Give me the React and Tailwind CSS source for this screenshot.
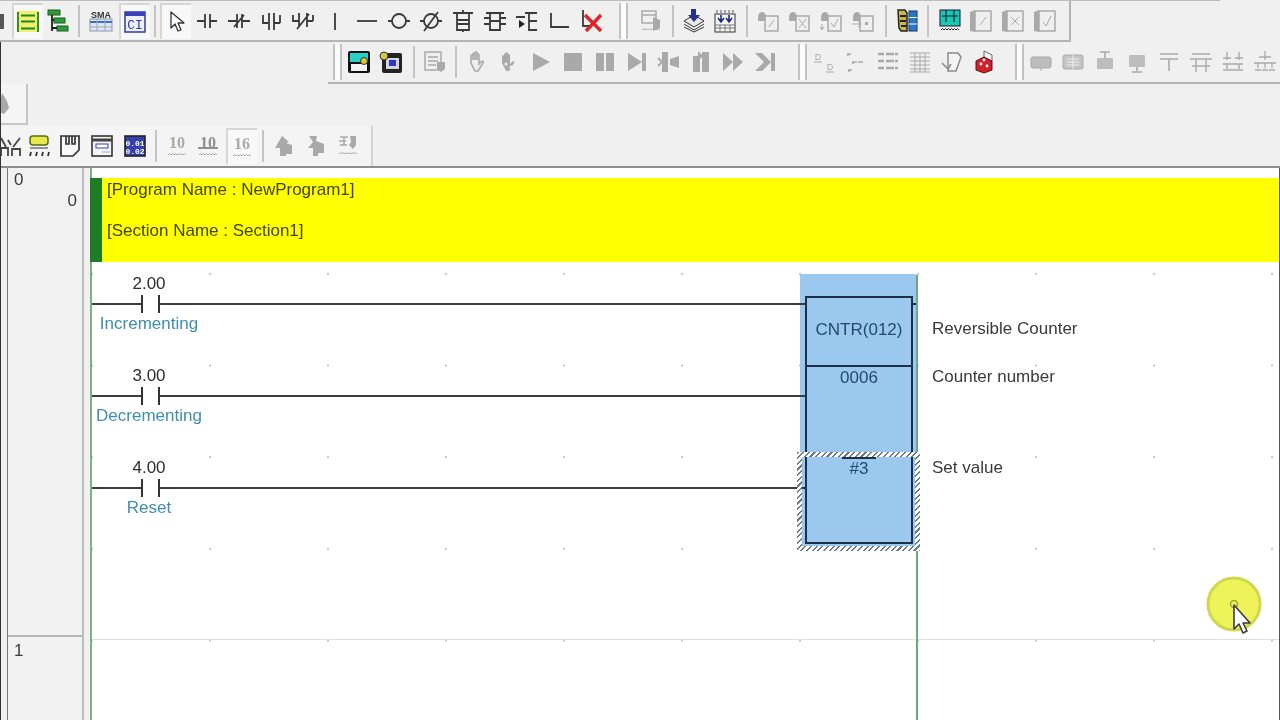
import React from 'react';

const DARK = '#3a3a3a';
const GREY = '#a9a9a9';

// plain 24x24 icon box
const Svg = ({ children }) => (
    <svg width="24" height="24" viewBox="0 0 24 24" fill="none" className="shrink-0">
        {children}
    </svg>
);

const Waves = ({ y = 21, color = GREY }) => (
    <path d={`M3 ${y}q1.5-3 3 0q1.5-3 3 0q1.5-3 3 0q1.5-3 3 0q1.5-3 3 0q1.5-3 3 0`} stroke={color} strokeWidth="1" />
);

// ladder symbols share the same stroke
const Ld = ({ d, color = DARK, w = 1.8 }) => <path d={d} stroke={color} strokeWidth={w} />;

const icons = {
    partial: <rect x="6" y="5" width="4" height="15" fill="#555" />,
    list: (
        <>
            <rect x="1" y="1" width="22" height="21" fill="#f4ee6a" />
            <Ld d="M3 3h-1v5h1M3 9h-1v5h1M3 16h-1v5h1M21 3h1v5h-1M21 9h1v5h-1M21 16h1v5h-1" color="#1d8a2a" />
            <Ld d="M5 5.5h14M5 11.5h14M5 18.5h14" color="#1d8a2a" w={2} />
        </>
    ),
    tree: (
        <>
            <rect x="2" y="1" width="12" height="5" fill="#2e9b3a" stroke="#1b5a22" />
            <rect x="8" y="9" width="11" height="5" fill="#2e9b3a" stroke="#1b5a22" />
            <rect x="11" y="17" width="11" height="5" fill="#2e9b3a" stroke="#1b5a22" />
            <Ld d="M6 6v16M6 11h2M6 19h5" color="#222" />
        </>
    ),
    sma: (
        <>
            <text x="12" y="9" textAnchor="middle" fontSize="9" fontWeight="700" fontFamily="Liberation Sans" fill="#333">SMA</text>
            <rect x="1" y="10" width="22" height="12" fill="#dfe6f2" stroke="#8a96b0" />
            <path d="M1 13h22" stroke="#3a6fd0" strokeWidth="2" />
            <path d="M1 18h22M8 10v12M16 10v12" stroke="#9aa4b8" />
        </>
    ),
    ci: (
        <>
            <rect x="2" y="2" width="20" height="20" fill="#eef0fa" stroke="#34389a" strokeWidth="1.5" />
            <rect x="2" y="2" width="20" height="4" fill="#3a40b8" />
            <text x="12" y="19" textAnchor="middle" fontSize="13" fontFamily="Liberation Mono" fill="#34389a">CI</text>
        </>
    ),
    arrow: <path d="M7 2v16l4-4 3 7 3-1-3-7h6z" fill="#fff" stroke="#333" strokeWidth="1.3" strokeLinejoin="round" />,
    no: <Ld d="M2 12h8M10 5v14M15 5v14M15 12h7" />,
    nc: <Ld d="M1 12h9M10 5v14M15 5v14M15 12h8M7 18L17 6" />,
    or: <Ld d="M4 6v8h6M10 4v17M15 4v17M15 14h6M21 6v8" />,
    orn: <Ld d="M2 6v6h6M8 4v14M16 4v14M16 12h6M22 6v6M6 20L18 5" />,
    vline: <Ld d="M12 4v17" />,
    hline: <Ld d="M2 12h20" />,
    coil: (
        <>
            <circle cx="12" cy="12" r="7" stroke={DARK} strokeWidth="1.8" />
            <Ld d="M1 12h4M19 12h4" />
        </>
    ),
    coiln: (
        <>
            <circle cx="12" cy="12" r="7" stroke={DARK} strokeWidth="1.8" />
            <Ld d="M1 12h4M19 12h4M5 22L19 3" />
        </>
    ),
    fb: <Ld d="M2 4h20M6 4v17h12V4M6 11h12M12 1v3M12 21v2M6 15h12" />,
    fbw: <Ld d="M3 4h18M7 4v17h10V4M7 12h10M1 9h6M1 15h6M17 9h6M17 15h6" />,
    fbl: (
        <>
            <Ld d="M1 8h9M1 12v0M10 4h12M14 4v17h8M14 12h8" />
            <path d="M4 11l6 4-6 4z" fill="#222" />
        </>
    ),
    ell: <Ld d="M4 4v14h18" />,
    del: (
        <>
            <Ld d="M3 1v16h8" />
            <Ld d="M5 6l16 16M21 6L6 22" color="#e0242c" w={3.4} />
        </>
    ),
    page: (
        <>
            <path d="M3 2h14v12H3zM3 6h14" stroke={GREY} strokeWidth="1.5" />
            <path d="M14 8l7 3v8l-7 3z" fill={GREY} />
            <Waves y={21} />
        </>
    ),
    stack: (
        <>
            <path d="M12 6l10 6-10 6-10-6z" fill="#e8e8e8" stroke="#333" />
            <path d="M2 15l10 6 10-6M2 18l10 5 10-5" stroke="#333" />
            <path d="M9 0h5v6h4l-6 7-6-7h3z" fill="#262f8a" />
        </>
    ),
    chart: (
        <>
            <rect x="2" y="5" width="20" height="18" fill="#f6f6f6" stroke="#333" />
            <path d="M2 16h20M2 19h20M7 16v7M12 16v7M17 16v7" stroke="#777" />
            <path d="M8 6v6M5 9l3 4 3-4M16 6v6M13 9l3 4 3-4" stroke="#1c2a80" strokeWidth="1.6" />
            <path d="M4 1v3M8 1v3M12 1v3M16 1v3M20 1v3" stroke="#555" />
        </>
    ),
    bellBox: (
        <>
            <path d="M2 9q0-6 4-6t4 6v3H2z" fill={GREY} />
            <rect x="9" y="7" width="13" height="15" fill="#efefef" stroke={GREY} strokeWidth="1.5" />
            <path d="M13 18l5-7" stroke={GREY} />
        </>
    ),
    bellX: (
        <>
            <path d="M2 9q0-6 4-6t4 6v3H2z" fill={GREY} />
            <rect x="9" y="7" width="13" height="15" fill="#efefef" stroke={GREY} strokeWidth="1.5" />
            <path d="M12 10l7 9M19 10l-7 9" stroke={GREY} />
        </>
    ),
    bellCheck: (
        <>
            <path d="M2 9q0-6 4-6t4 6v3H2z" fill={GREY} />
            <rect x="9" y="7" width="13" height="15" fill="#efefef" stroke={GREY} strokeWidth="1.5" />
            <path d="M12 14l3 4 4-8M3 15v5M1 18l2 3 2-3" stroke={GREY} />
        </>
    ),
    bellDot: (
        <>
            <path d="M2 9q0-6 4-6t4 6v3H2z" fill={GREY} />
            <rect x="9" y="7" width="13" height="15" fill="#efefef" stroke={GREY} strokeWidth="1.5" />
            <path d="M1 15h9M7 12l3 3-3 3" stroke={GREY} />
            <rect x="14" y="13" width="3" height="3" fill={GREY} />
        </>
    ),
    film: (
        <>
            <path d="M3 1h7l2 3v18H6L4 19z" fill="#c8b94a" stroke="#222" strokeWidth="1.5" />
            <path d="M5 7h6M5 12h6M6 17h6" stroke="#222" strokeWidth="2" />
            <rect x="14" y="2" width="8" height="20" fill="#2a78c8" stroke="#16305c" />
            <path d="M14 8.5h8M14 15h8" stroke="#fff" />
        </>
    ),
    ladderTeal: (
        <>
            <rect x="2" y="1" width="20" height="16" fill="#1cc8ac" stroke="#114" />
            <path d="M8 1v12M16 1v12M4 7h16" stroke="#114" />
            <Waves y={21} color="#222" />
        </>
    ),
    bookBox: (
        <>
            <path d="M1 3l5-2v22l-5-1z" fill={GREY} />
            <rect x="6" y="2" width="16" height="20" fill="#efefef" stroke={GREY} strokeWidth="1.5" />
            <path d="M11 16l6-8" stroke={GREY} />
        </>
    ),
    bookX: (
        <>
            <path d="M1 3l5-2v22l-5-1z" fill={GREY} />
            <rect x="6" y="2" width="16" height="20" fill="#efefef" stroke={GREY} strokeWidth="1.5" />
            <path d="M10 8l8 8M18 8l-8 8" stroke={GREY} />
        </>
    ),
    bookCheck: (
        <>
            <path d="M1 3l5-2v22l-5-1z" fill={GREY} />
            <rect x="6" y="2" width="16" height="20" fill="#efefef" stroke={GREY} strokeWidth="1.5" />
            <path d="M10 13l3 4 5-10" stroke={GREY} />
        </>
    ),
    // row 2
    card: (
        <>
            <rect x="1" y="1" width="22" height="22" rx="2" fill="#111" />
            <rect x="3" y="3" width="18" height="9" fill="#28d0c8" />
            <rect x="4" y="14" width="16" height="7" fill="#f4f4f4" />
            <circle cx="17" cy="11" r="3.5" fill="#d8c83a" stroke="#333" />
        </>
    ),
    cardB: (
        <>
            <rect x="3" y="3" width="20" height="20" rx="2" fill="#222" />
            <rect x="7" y="8" width="13" height="11" fill="#d4d4e8" />
            <rect x="10" y="10" width="7" height="6" fill="#3038b8" />
            <circle cx="5" cy="6" r="4" fill="#d4c44a" stroke="#333" />
        </>
    ),
    sheet: (
        <>
            <rect x="2" y="2" width="16" height="18" fill="#efefef" stroke={GREY} strokeWidth="1.5" />
            <path d="M5 7h10M5 11h10M5 15h8" stroke={GREY} strokeWidth="1.5" />
            <path d="M14 12h8v7l-4 3-4-3z" fill={GREY} />
        </>
    ),
    hand: (
        <path d="M5 13V6q1-2 2 0v4V4q1-2 2 0v6V3q1-2 2 0v7V5q1-2 2 0v9l3-3q2 0 1 2l-5 8H9z" fill="#efefef" stroke={GREY} strokeWidth="1.6" />
    ),
    handFill: (
        <>
            <path d="M5 13V6q1-2 2 0v4V4q1-2 2 0v6V3q1-2 2 0v7V5q1-2 2 0v9l3-3q2 0 1 2l-5 8H9z" fill={GREY} />
            <circle cx="9" cy="14" r="1.5" fill="#f0f0f0" />
            <circle cx="14" cy="17" r="1.5" fill="#f0f0f0" />
        </>
    ),
    play: <path d="M4 3l17 9-17 9z" fill={GREY} />,
    stop: <rect x="3" y="3" width="18" height="18" fill={GREY} />,
    pause: (
        <>
            <rect x="3" y="3" width="8" height="18" fill={GREY} />
            <rect x="13" y="3" width="8" height="18" fill={GREY} />
        </>
    ),
    next: (
        <>
            <path d="M3 3l14 9-14 9z" fill={GREY} />
            <rect x="17" y="3" width="4" height="18" fill={GREY} />
        </>
    ),
    stepIn: (
        <>
            <rect x="5" y="2" width="6" height="20" fill={GREY} />
            <path d="M13 9l9-3v12l-9-3z" fill={GREY} />
            <path d="M1 8l4 4-4 4" stroke={GREY} strokeWidth="2" />
        </>
    ),
    stepOut: (
        <>
            <rect x="4" y="6" width="7" height="16" fill={GREY} />
            <rect x="13" y="2" width="7" height="20" fill={GREY} />
            <path d="M9 1l5 5-5 5z" fill={GREY} />
        </>
    ),
    ff: (
        <>
            <path d="M2 3l10 9-10 9z" fill={GREY} />
            <path d="M12 3l10 9-10 9z" fill={GREY} />
        </>
    ),
    end: <path d="M2 3h7l9 9-9 9H2l9-9zM18 3h4v18h-4z" fill={GREY} />,
    // row 2, second group
    dd: (
        <>
            <text x="6" y="10" fontSize="9" textAnchor="middle" fontFamily="Liberation Sans" fill={GREY}>D</text>
            <path d="M2 12h8M14 22h8" stroke={GREY} />
            <text x="18" y="20" fontSize="9" textAnchor="middle" fontFamily="Liberation Sans" fill={GREY}>D</text>
        </>
    ),
    ddd: <path d="M3 4h4M3 5h2M8 12h5M8 13h2M4 20h4M4 21h2M14 12h5" stroke={GREY} strokeWidth="1.6" />,
    dgrid: <path d="M2 4h6M10 4h8M2 11h6M10 11h8M2 18h6M10 18h8M19 4h3M19 11h3M19 18h3" stroke={GREY} strokeWidth="2.4" />,
    table: <path d="M2 3h20M2 7h20M2 11h20M2 15h20M2 19h20M2 22h20M7 3v19M12 3v19M17 3v19" stroke={GREY} />,
    docDown: (
        <>
            <path d="M8 3h10l3 4-5 14H8z" stroke="#8a8a8a" strokeWidth="1.5" fill="#f4f4f4" />
            <path d="M2 13l6 6 3-5" stroke="#8a8a8a" strokeWidth="1.5" />
        </>
    ),
    redDice: (
        <>
            <path d="M12 1l8 4v6l-8-3z" fill="#f4f4f4" stroke="#666" />
            <path d="M4 11l8-4 8 4v9l-8 3-8-3z" fill="#d0202a" stroke="#5a1014" />
            <circle cx="9" cy="14" r="1.4" fill="#fff" />
            <circle cx="15" cy="16" r="1.4" fill="#fff" />
            <circle cx="12" cy="10" r="1.4" fill="#fff" />
        </>
    ),
    // row 2, third group
    busA: (
        <>
            <rect x="2" y="7" width="20" height="11" rx="2" fill="#bdbdbd" stroke={GREY} />
            <path d="M12 18v3" stroke={GREY} />
        </>
    ),
    busB: (
        <>
            <rect x="2" y="5" width="20" height="14" rx="2" fill="#c4c4c4" stroke={GREY} />
            <path d="M6 9h12M6 12h12M6 15h12M12 5v14" stroke="#eee" />
        </>
    ),
    busC: (
        <>
            <path d="M7 2h10M12 2v6" stroke={GREY} strokeWidth="1.6" />
            <rect x="4" y="8" width="16" height="11" rx="1" fill="#bdbdbd" />
        </>
    ),
    busD: (
        <>
            <rect x="4" y="5" width="16" height="12" rx="1" fill="#bdbdbd" />
            <path d="M12 17v4M7 22h10" stroke={GREY} strokeWidth="1.6" />
        </>
    ),
    tOne: <path d="M3 4h18M3 9h18M12 9v12" stroke={GREY} strokeWidth="1.6" />,
    tTwo: <path d="M3 4h18M1 9h22M7 9v7M17 9v7M3 16h18M7 16v6M17 16v6" stroke={GREY} strokeWidth="1.4" />,
    tThree: <path d="M6 2v8M18 2v8M2 8h8M14 8h8M2 14h20M6 14v5M18 14v5M2 20h20" stroke={GREY} strokeWidth="1.4" />,
    tFour: <path d="M12 1v9M6 7h12M1 13h22M5 13v5M12 13v5M19 13v5M2 20h6M9 20h6M16 20h6" stroke={GREY} strokeWidth="1.3" />,
    // row 3 and row 4
    blob: <path d="M16 1l5 8 2 7-5 6-7-3-3-7 6-2z" fill={GREY} />,
    scissors: <path d="M3 22V14h7v8M14 22v-7h8v7M8 13L3 4M15 13l7-9M10 6l3 5" stroke="#444" strokeWidth="1.8" />,
    yellowWave: (
        <>
            <rect x="3" y="2" width="18" height="9" rx="3" fill="#e8e84a" stroke="#5a6a1a" strokeWidth="1.5" />
            <path d="M3 14h18" stroke="#333" />
            <path d="M4 18l-1 4M10 18l-1 4M16 18l-1 4M22 18l-1 4" stroke="#333" strokeWidth="1.8" />
        </>
    ),
    tag: <path d="M3 2h18v14l-6 6H3zM8 2v8h3V2M14 2v8h3V2" stroke="#333" strokeWidth="1.7" fill="#fafafa" />,
    win: (
        <>
            <rect x="2" y="2" width="20" height="20" fill="#f4f4f4" stroke="#333" strokeWidth="1.6" />
            <path d="M2 6h20" stroke="#444" strokeWidth="3" />
            <rect x="6" y="10" width="12" height="4" fill="#fff" stroke="#3a3f9a" />
            <path d="M12 18h8" stroke="#aaa" />
        </>
    ),
    winBlue: (
        <>
            <rect x="2" y="2" width="20" height="20" fill="#3840b0" stroke="#222" strokeWidth="1.6" />
            <text x="12" y="12" textAnchor="middle" fontSize="8" fontWeight="700" fontFamily="Liberation Mono" fill="#fff">0.01</text>
            <text x="12" y="20" textAnchor="middle" fontSize="8" fontWeight="700" fontFamily="Liberation Mono" fill="#fff">0.02</text>
        </>
    ),
    ten: (
        <>
            <text x="12" y="14" textAnchor="middle" fontSize="16" fontWeight="700" fontFamily="Liberation Serif" fill={GREY}>10</text>
            <Waves y={21} />
        </>
    ),
    tenX: (
        <>
            <text x="12" y="14" textAnchor="middle" fontSize="16" fontWeight="700" fontFamily="Liberation Serif" fill="#8f8f8f">10</text>
            <path d="M2 14h20" stroke="#8f8f8f" strokeWidth="2" />
            <Waves y={21} />
        </>
    ),
    sixteen: (
        <>
            <text x="12" y="14" textAnchor="middle" fontSize="16" fontWeight="700" fontFamily="Liberation Serif" fill={GREY}>16</text>
            <Waves y={21} />
        </>
    ),
    upA: <path d="M10 2l7 6-3 1 6 2v9h-6v2H8v-8H3z" fill={GREY} />,
    upB: <path d="M5 2h8l-1 5 8 3v9h-6v3H9v-8H4l5-6z" fill={GREY} />,
    upC: (
        <>
            <path d="M14 2h6v9l-3 4-4-4 2-3z" fill={GREY} />
            <path d="M4 3h8M8 3v8M3 7h7M4 11h7" stroke={GREY} strokeWidth="1.5" />
            <Waves y={20} />
        </>
    ),
};

// one toolbar button; w overrides the usual 32px slot
const Tool = ({ name, w = 'w-8', pressed }) => (
    <div className={`${w} h-full shrink-0 flex items-center justify-center overflow-hidden`}>
        {pressed ? (
            <div className="w-[31px] h-[36px] flex items-center justify-center bg-[#f8f8f8] border-l-2 border-t-2 border-[#d6d6d6]">
                <Svg>{icons[name]}</Svg>
            </div>
        ) : (
            <Svg>{icons[name]}</Svg>
        )}
    </div>
);

const Sep = ({ w = 'w-[14px]' }) => (
    <div className={`${w} h-full shrink-0 flex items-center justify-center`}>
        <div className="w-[2px] h-[32px] bg-[#c4c4c4]" />
    </div>
);

const Grip = ({ w }) => (
    <div className={`${w} h-full shrink-0 flex items-center justify-end pr-px`}>
        <div className="w-[9px] h-[36px] border-x-2 border-[#c2c2c2] bg-[#fbfbfb]" />
    </div>
);

const Row1 = () => (
    <div className="flex h-[41px] w-[1071px] border-b-2 border-r-2 border-[#b4b4b4]">
        <Tool name="partial" w="w-[11px]" />
        <Tool name="list" pressed />
        <Tool name="tree" w="w-[30px]" />
        <Sep w="w-[12px]" />
        <Tool name="sma" />
        <Tool name="ci" w="w-[34px]" pressed />
        <Sep w="w-[8px]" />
        <Tool name="arrow" pressed />
        <Tool name="no" />
        <Tool name="nc" />
        <Tool name="or" />
        <Tool name="orn" />
        <Tool name="vline" />
        <Tool name="hline" />
        <Tool name="coil" />
        <Tool name="coiln" />
        <Tool name="fb" />
        <Tool name="fbw" />
        <Tool name="fbl" />
        <Tool name="ell" />
        <Tool name="del" w="w-[34px]" />
        <Grip w="w-[20px]" />
        <div className="w-[6px] shrink-0" />
        <Tool name="page" />
        <Sep w="w-[12px]" />
        <Tool name="stack" w="w-[30px]" />
        <Tool name="chart" />
        <Sep w="w-[12px]" />
        <Tool name="bellBox" w="w-[30px]" />
        <Tool name="bellX" />
        <Tool name="bellCheck" />
        <Tool name="bellDot" />
        <Sep />
        <Tool name="film" w="w-[28px]" />
        <Sep />
        <Tool name="ladderTeal" w="w-[30px]" />
        <Tool name="bookBox" />
        <Tool name="bookX" />
        <Tool name="bookCheck" />
    </div>
);

const Row2 = () => (
    <div className="flex h-[42px] ml-[328px] w-[952px] border-b-2 border-[#b4b4b4]">
        <Grip w="w-[15px]" />
        <Tool name="card" />
        <Tool name="cardB" />
        <Sep />
        <Tool name="sheet" w="w-[28px]" />
        <Sep />
        <Tool name="hand" w="w-[30px]" />
        <Tool name="handFill" />
        <Tool name="play" />
        <Tool name="stop" />
        <Tool name="pause" />
        <Tool name="next" />
        <Tool name="stepIn" />
        <Tool name="stepOut" />
        <Tool name="ff" />
        <Tool name="end" />
        <Grip w="w-[27px]" />
        <Tool name="dd" />
        <Tool name="ddd" />
        <Tool name="dgrid" />
        <Tool name="table" />
        <Tool name="docDown" />
        <Tool name="redDice" />
        <Grip w="w-[25px]" />
        <Tool name="busA" />
        <Tool name="busB" />
        <Tool name="busC" />
        <Tool name="busD" />
        <Tool name="tOne" />
        <Tool name="tTwo" />
        <Tool name="tThree" />
        <Tool name="tFour" />
    </div>
);

const Row3 = () => (
    <div className="h-[42px]">
        <div className="h-[41px] w-[28px] bg-[#f5f5f5] border-r-2 border-b-2 border-[#c6c6c6] flex items-center overflow-hidden">
            <div className="-ml-[14px]">
                <Svg>{icons.blob}</Svg>
            </div>
        </div>
    </div>
);

const Row4 = () => (
    <div className="flex h-[40px] w-[373px] bg-[#f4f4f4] border-r-2 border-[#d4d4d4]">
        <div className="w-[23px] h-full flex items-center overflow-hidden">
            <div className="-ml-[2px]">
                <Svg>{icons.scissors}</Svg>
            </div>
        </div>
        <Tool name="yellowWave" />
        <Tool name="tag" w="w-[30px]" />
        <Tool name="win" w="w-[34px]" />
        <Tool name="winBlue" />
        <Sep w="w-[10px]" />
        <Tool name="ten" w="w-[31px]" />
        <Tool name="tenX" />
        <Tool name="sixteen" w="w-[34px]" pressed />
        <Sep w="w-[10px]" />
        <Tool name="upA" />
        <Tool name="upB" />
        <Tool name="upC" />
    </div>
);

// contact with its address above and comment below, one per input of the counter
const InputRow = ({ address, comment, w }) => (
    <div className={`${w} relative z-10 h-[92px] shrink-0`}>
        <div className="w-[114px] h-5 text-center text-[#2d2d2d]">{address}</div>
        <div className="flex items-center h-5">
            <div className="w-[49px] h-[2px] bg-[#3c3c3c]" />
            <div className="w-[2px] h-[18px] bg-[#333]" />
            <div className="w-[15px]" />
            <div className="w-[2px] h-[18px] bg-[#333]" />
            <div className="flex-1 h-[2px] bg-[#3c3c3c]" />
        </div>
        <div className="w-[114px] h-5 text-center text-[#3f8db0] whitespace-nowrap">{comment}</div>
    </div>
);

const CounterBlock = () => (
    <div className="absolute left-[708px] top-[12px] w-[116px] h-[277px] bg-[#9ac8ef]">
        <div className="absolute left-[5px] top-[22px] w-[108px] h-[248px] border-2 border-[#1d3048] flex flex-col text-[#1f4a70] text-center">
            <div className="h-[69px] shrink-0 border-b-2 border-[#1d3048] pt-[22px] whitespace-nowrap">CNTR(012)</div>
            <div className="pt-px">0006</div>
            <div className="w-[34px] h-[2px] bg-[#1d3048] mx-auto mt-[69px]" />
            <div>#3</div>
        </div>
        {/* output stub past the block */}
        <div className="absolute left-[111px] top-[29px] w-[7px] h-[2px] bg-[#1d3048]" />
        <div className="absolute left-[0px] top-[213px] w-[5px] h-[2px] bg-[#1d3048]" />
    </div>
);

export default function App() {
    return (
        <div className="relative w-[1280px] h-[720px] overflow-hidden bg-[#f0f0f0] blur-[0.4px] font-['Liberation_Sans',Arial,sans-serif]">
            <div className="h-px w-[1220px] bg-[#bdbdbd]" />
            <Row1 />
            <Row2 />
            <Row3 />
            <Row4 />
            <div className="h-[2px] bg-[#8e8e8e]" />

            <div className="flex h-[552px] text-[17px] leading-5 text-[#3a3a3a]">
                <div className="w-[8px] shrink-0 border-r border-[#777]" />
                <div className="w-[76px] shrink-0 flex flex-col border-r-2 border-[#bcbcbc] bg-[#f2f2f2]">
                    <div className="h-[469px] shrink-0 border-b-2 border-[#b4b4b4] flex flex-col pt-[2px] px-[6px]">
                        <span>0</span>
                        <span className="self-end -mr-[1px] mt-px">0</span>
                    </div>
                    <div className="pt-[4px] px-[6px]">1</div>
                </div>
                <div className="w-[6px] shrink-0 bg-[#f0f0f0]" />

                <div className="flex-1 flex flex-col bg-white border-r border-r-[#555]">
                    <div className="h-[10px] shrink-0 border-l-2 border-[#7cb083]" />
                    <div className="h-[84px] shrink-0 flex bg-[#ffff00] text-[#444410]">
                        <div className="w-[12px] bg-[#1e7d24]" />
                        <div className="pl-[5px] pt-[2px] flex flex-col gap-[21px] whitespace-nowrap">
                            <span>[Program Name : NewProgram1]</span>
                            <span>[Section Name : Section1]</span>
                        </div>
                    </div>

                    {/* the rung itself; dots are the editor's grid */}
                    <div className="relative flex-1 pt-[12px] border-l-2 border-[#7cb083] bg-[radial-gradient(circle,#c6c6c6_1px,transparent_1.6px)] bg-[size:118px_91.67px] bg-[position:59px_-34px]">
                        <InputRow address="2.00" comment="Incrementing" w="w-[713px]" />
                        <InputRow address="3.00" comment="Decrementing" w="w-[713px]" />
                        <InputRow address="4.00" comment="Reset" w="w-[705px]" />

                        <div className="absolute left-0 right-0 top-[377px] h-[1px] bg-[#dedede]" />
                        <CounterBlock />
                        <div className="absolute left-[824px] top-[13px] bottom-0 w-[2px] bg-[#6fa876]" />

                        {/* selection hatch round the set value operand */}
                        <div className="absolute z-20 left-[705px] top-[190px] w-[123px] h-[99px] border-[5px] border-transparent [border-image:repeating-linear-gradient(135deg,#6f7c85_0,#6f7c85_1.5px,#ffffff_1.5px,#ffffff_4px)_5]" />

                        <div className="absolute left-[840px] top-[57px] whitespace-nowrap">Reversible Counter</div>
                        <div className="absolute left-[840px] top-[105px] whitespace-nowrap">Counter number</div>
                        <div className="absolute left-[840px] top-[196px] whitespace-nowrap">Set value</div>

                        {/* recorded mouse pointer */}
                        <svg width="64" height="64" viewBox="0 0 64 64" fill="none" className="absolute left-[1110px] top-[310px]">
                            <circle cx="32" cy="32" r="26" fill="#eef35a" stroke="#cdd84e" strokeWidth="3" />
                            <circle cx="32" cy="32" r="3.5" stroke="#9aa83a" strokeWidth="1.5" />
                            <path d="M32 33v24l5-5 4 9 4-2-4-8h7z" fill="#fff" stroke="#3c3c3c" strokeWidth="1.6" strokeLinejoin="round" />
                        </svg>
                    </div>
                </div>
            </div>

            <div className="absolute left-0 top-[42px] bottom-0 w-px bg-[#333]" />
        </div>
    );
}
